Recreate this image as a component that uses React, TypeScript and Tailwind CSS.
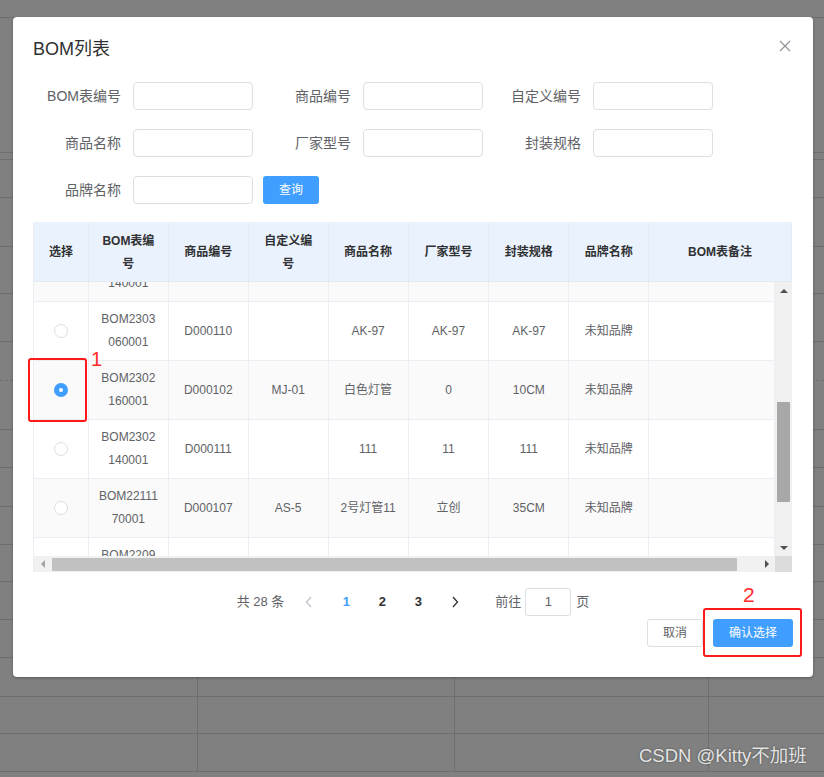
const bgRows = [
  { h: "h-[18px]", split: false, dashed: false },
  { h: "h-[135px]", split: false, dashed: false },
  { h: "h-[7px]", split: false, dashed: false },
  { h: "h-[38px]", split: false, dashed: false },
  { h: "h-[49px]", split: false, dashed: false },
  { h: "h-[47px]", split: false, dashed: false },
  { h: "h-[48px]", split: false, dashed: false },
  { h: "h-[39px]", split: false, dashed: true },
  { h: "h-[49px]", split: false, dashed: false },
  { h: "h-[38px]", split: false, dashed: false },
  { h: "h-[39px]", split: false, dashed: false },
  { h: "h-[38px]", split: false, dashed: false },
  { h: "h-[37px]", split: false, dashed: false },
  { h: "h-[38px]", split: true, dashed: false },
  { h: "h-[38px]", split: true, dashed: false },
  { h: "h-[39px]", split: true, dashed: false },
  { h: "h-[37px]", split: true, dashed: false },
  { h: "h-[38px]", split: true, dashed: false },
]

const headCols = [
  { w: "w-[55px]", label: ["选择"] },
  { w: "w-[80px]", label: ["BOM表编", "号"] },
  { w: "w-[80px]", label: ["商品编号"] },
  { w: "w-[80px]", label: ["自定义编", "号"] },
  { w: "w-[80px]", label: ["商品名称"] },
  { w: "w-[81px]", label: ["厂家型号"] },
  { w: "w-[80px]", label: ["封装规格"] },
  { w: "w-[80px]", label: ["品牌名称"] },
  { w: "w-[143px]", label: ["BOM表备注"] },
]

const bodyWidths = [
  "w-[80px]",
  "w-[80px]",
  "w-[80px]",
  "w-[80px]",
  "w-[81px]",
  "w-[80px]",
  "w-[80px]",
  "w-[126px]",
]

type Row = {
  bom: string[]
  cells: string[]
  checked?: boolean
}

const rows: Row[] = [
  { bom: ["BOM2303", "140001"], cells: ["D000112", "", "AK-98", "AK-98", "AK-98", "未知品牌", ""] },
  { bom: ["BOM2303", "060001"], cells: ["D000110", "", "AK-97", "AK-97", "AK-97", "未知品牌", ""] },
  { bom: ["BOM2302", "160001"], cells: ["D000102", "MJ-01", "白色灯管", "0", "10CM", "未知品牌", ""], checked: true },
  { bom: ["BOM2302", "140001"], cells: ["D000111", "", "111", "11", "111", "未知品牌", ""] },
  { bom: ["BOM22111", "70001"], cells: ["D000107", "AS-5", "2号灯管11", "立创", "35CM", "未知品牌", ""] },
  { bom: ["BOM2209", "010001"], cells: ["D000105", "", "LED", "LED", "5CM", "未知品牌", ""] },
]

function FormItem({ label }: { label: string }) {
  return (
    <div className="mr-[10px] flex items-center">
      <label className="w-[100px] pr-[12px] text-right text-[14px] leading-[28px] text-[#606266]">
        {label}
      </label>
      <div className="h-[28px] w-[120px] rounded-[4px] border border-[#dcdfe6] bg-white" />
    </div>
  )
}

function Radio({ checked }: { checked?: boolean }) {
  return checked ? (
    <span className="flex h-[14px] w-[14px] items-center justify-center rounded-full bg-[#409eff]">
      <span className="h-[4px] w-[4px] rounded-full bg-white" />
    </span>
  ) : (
    <span className="h-[14px] w-[14px] rounded-full border border-[#dcdfe6] bg-white" />
  )
}

function Triangle({ dir, color }: { dir: "up" | "down" | "left" | "right"; color: string }) {
  const pts = {
    up: "0,6 4,2 8,6",
    down: "0,2 8,2 4,6",
    left: "6,0 6,8 2,4",
    right: "2,0 2,8 6,4",
  }[dir]
  return (
    <svg width="8" height="8" viewBox="0 0 8 8">
      <polygon points={pts} fill={color} />
    </svg>
  )
}

function Chevron({ left, color }: { left?: boolean; color: string }) {
  return (
    <svg width="8" height="12" viewBox="0 0 8 12">
      <polyline
        points={left ? "6,1 1.5,6 6,11" : "2,1 6.5,6 2,11"}
        fill="none"
        stroke={color}
        strokeWidth="1.3"
      />
    </svg>
  )
}

function BomTable() {
  return (
    <div className="w-[759px] border-l border-[#ebeef5]">
      <div className="flex h-[60px] bg-[#eaf2fd]">
        {headCols.map((c, i) => (
          <div
            key={i}
            className={`${c.w} flex items-center justify-center border-r border-b border-[#e4ebf5] px-[10px] pt-[2px] text-center text-[12px] font-bold leading-[23px] text-[#303133]`}
          >
            <div>
              {c.label.map((l) => (
                <div key={l}>{l}</div>
              ))}
            </div>
          </div>
        ))}
      </div>

      <div className="flex">
        <div className="h-[274px] w-[742px] overflow-hidden">
          <div className="mt-[-39px]">
            {rows.map((r, ri) => (
              <div
                key={ri}
                className={`flex h-[59px] ${ri % 2 === 0 ? "bg-[#fafafa]" : "bg-white"}`}
              >
                <div className="flex w-[55px] items-center justify-center border-r border-b border-[#ebeef5]">
                  <Radio checked={r.checked} />
                </div>
                {[r.bom, ...r.cells.map((c) => [c])].map((lines, ci) => (
                  <div
                    key={ci}
                    className={`${bodyWidths[ci]} flex items-center justify-center border-r border-b border-[#ebeef5] px-[10px] text-center text-[12px] leading-[23px] text-[#606266]`}
                  >
                    <div>
                      {lines.map((l, li) => (
                        <div key={li}>{l}</div>
                      ))}
                    </div>
                  </div>
                ))}
              </div>
            ))}
          </div>
        </div>
        <div className="flex h-[274px] w-[17px] flex-col items-center bg-[#f1f1f1]">
          <div className="flex h-[17px] items-center justify-center">
            <Triangle dir="up" color="#505050" />
          </div>
          <div className="flex-1 w-full">
            <div className="mt-[103px] ml-[2px] h-[100px] w-[13px] bg-[#a8a8a8]" />
          </div>
          <div className="flex h-[17px] items-center justify-center">
            <Triangle dir="down" color="#505050" />
          </div>
        </div>
      </div>

      <div className="flex h-[16px]">
        <div className="flex w-[742px] items-center bg-[#f1f1f1]">
          <div className="flex w-[17px] justify-center">
            <Triangle dir="left" color="#a3a3a3" />
          </div>
          <div className="ml-[1px] h-[13px] w-[685px] bg-[#c1c1c1]" />
          <div className="flex-1" />
          <div className="flex w-[17px] justify-center">
            <Triangle dir="right" color="#505050" />
          </div>
        </div>
        <div className="w-[17px] bg-[#dcdcdc]" />
      </div>
    </div>
  )
}

export default function App() {
  return (
    <div className="relative h-[777px] w-[824px] overflow-hidden bg-[#808080] font-['Liberation_Sans','Noto_Sans_CJK_SC',sans-serif]">
      <div className="flex flex-col">
        {bgRows.map((r, i) => (
          <div
            key={i}
            className={`${r.h} flex border-b border-[#6e6e6e] ${r.dashed ? "border-dashed" : ""}`}
          >
            {r.split && (
              <>
                <div className="w-[198px] border-r border-[#6e6e6e]" />
                <div className="w-[257px] border-r border-[#6e6e6e]" />
                <div className="w-[254px] border-r border-[#6e6e6e]" />
              </>
            )}
          </div>
        ))}
      </div>

      <div className="absolute left-[13px] top-[17px] flex h-[660px] w-[800px] flex-col rounded-[4px] bg-white px-[20px] pt-[20px] shadow-[0_1px_3px_rgba(0,0,0,0.3)]">
        <div className="flex h-[24px] items-center justify-between">
          <span className="text-[18px] leading-[24px] text-[#303133]">BOM列表</span>
          <svg width="12" height="12" viewBox="0 0 12 12" className="mr-[2px] mb-[6px]">
            <path d="M1 1L11 11M11 1L1 11" stroke="#909399" strokeWidth="1.2" />
          </svg>
        </div>

        <div className="mt-[21px] flex flex-col gap-[19px]">
          <div className="flex">
            <FormItem label="BOM表编号" />
            <FormItem label="商品编号" />
            <FormItem label="自定义编号" />
          </div>
          <div className="flex">
            <FormItem label="商品名称" />
            <FormItem label="厂家型号" />
            <FormItem label="封装规格" />
          </div>
          <div className="flex">
            <FormItem label="品牌名称" />
            <button className="h-[28px] w-[56px] rounded-[3px] bg-[#409eff] text-[12px] text-white">
              查询
            </button>
          </div>
        </div>

        <div className="mt-[18px]">
          <BomTable />
        </div>

        <div className="mt-[16px] flex h-[28px] items-center justify-center text-[13px] text-[#606266]">
          <span className="mr-[10px]">共 28 条</span>
          <span className="flex w-[30px] justify-center">
            <Chevron left color="#c0c4cc" />
          </span>
          <div className="ml-[4px] flex font-bold">
            <span className="w-[36px] text-center text-[#409eff]">1</span>
            <span className="w-[36px] text-center text-[#303133]">2</span>
            <span className="w-[36px] text-center text-[#303133]">3</span>
          </div>
          <span className="ml-[4px] flex w-[30px] justify-center">
            <Chevron color="#303133" />
          </span>
          <span className="ml-[25px]">前往</span>
          <span className="ml-[4px] flex h-[28px] w-[46px] items-center justify-center rounded-[3px] border border-[#dcdfe6] text-[#606266]">
            1
          </span>
          <span className="ml-[5px]">页</span>
        </div>

        <div className="mt-[3px] flex justify-end gap-[10px]">
          <button className="h-[28px] w-[56px] rounded-[3px] border border-[#dcdfe6] bg-white text-[12px] text-[#606266]">
            取消
          </button>
          <button className="h-[28px] w-[80px] rounded-[3px] bg-[#409eff] text-[12px] text-white">
            确认选择
          </button>
        </div>
      </div>

      <div className="absolute left-[28px] top-[358px] h-[64px] w-[59px] rounded-[3px] border-2 border-[#ff1a1a]" />
      <span className="absolute left-[91px] top-[348px] text-[20px] leading-[22px] text-[#ff2a2a]">1</span>
      <div className="absolute left-[703px] top-[608px] h-[49px] w-[99px] rounded-[3px] border-2 border-[#ff1a1a]" />
      <span className="absolute left-[743px] top-[583px] text-[21px] leading-[23px] text-[#ff2a2a]">2</span>

      <span className="absolute left-[639px] top-[744px] text-[18.5px] leading-[24px] text-[#e4e4e4] [text-shadow:0_0_2px_rgba(0,0,0,0.5)]">
        CSDN @Kitty不加班
      </span>
    </div>
  )
}
